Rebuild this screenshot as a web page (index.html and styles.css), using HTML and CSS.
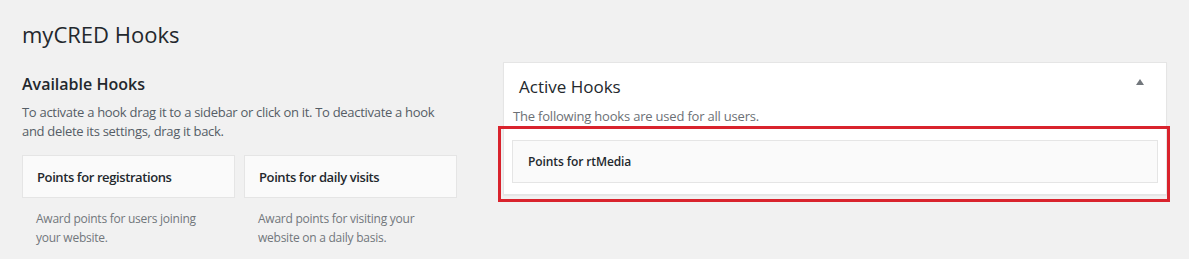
FILE: index.html
```html
<!DOCTYPE html>
<html>
<head>
<meta charset="utf-8">
<link rel="stylesheet" href="styles.css">
</head>
<body>
<div class="wrap">
  <h1 class="page-title">myCRED Hooks</h1>
  <div class="columns">
    <div class="left">
      <h2 class="section-title">Available Hooks</h2>
      <p class="section-desc">To activate a hook drag it to a sidebar or click on it. To deactivate a hook and delete its settings, drag it back.</p>
      <div class="hook-grid">
        <div class="hook">
          <div class="hook-card">Points for registrations</div>
          <p class="hook-desc">Award points for users joining your website.</p>
        </div>
        <div class="hook">
          <div class="hook-card">Points for daily visits</div>
          <p class="hook-desc">Award points for visiting your website on a daily basis.</p>
        </div>
      </div>
    </div>
    <div class="right">
      <div class="postbox">
        <div class="postbox-head">
          <h2 class="postbox-title">Active Hooks</h2>
          <span class="toggle"></span>
        </div>
        <p class="postbox-desc">The following hooks are used for all users.</p>
        <div class="active-area">
          <div class="hook-card active-card">Points for rtMedia</div>
          <div class="highlight"></div>
        </div>
      </div>
    </div>
  </div>
</div>
</body>
</html>
```

FILE: styles.css
```css
html, body {
  margin: 0;
  padding: 0;
  background: #f1f1f1;
}
body {
  font-family: "Open Sans", "Noto Sans", sans-serif;
  color: #23282d;
  font-size: 13px;
}
.wrap {
  padding: 0 22px 0 22px;
}
.page-title {
  margin: 0;
  padding-top: 20px;
  font-size: 22px;
  font-weight: 400;
  line-height: 29px;
  color: #23282d;
}
.columns {
  display: flex;
  margin-top: 23px;
}
.left {
  width: 435px;
  flex: none;
}
.right {
  flex: 1;
  margin-left: 46px;
  margin-top: -10px;
}
.section-title {
  margin: 0;
  font-size: 16px;
  font-weight: 600;
  line-height: 24px;
  color: #23282d;
}
.section-desc {
  margin: 7px 0 0 0;
  font-size: 13px;
  line-height: 19px;
  letter-spacing: -0.3px;
  color: #555d66;
}
.hook-grid {
  display: grid;
  grid-template-columns: 213px 213px;
  column-gap: 9px;
  margin-top: 14px;
}
.hook-card {
  box-sizing: border-box;
  height: 43px;
  background: #fafafa;
  border: 1px solid #e5e5e5;
  padding: 0 14px;
  display: flex;
  align-items: center;
  font-size: 13px;
  font-weight: 600;
  letter-spacing: -0.4px;
  color: #23282d;
}
.hook-desc {
  margin: 11px 0 0 0;
  padding: 0 14px;
  font-size: 12px;
  line-height: 19px;
  letter-spacing: -0.25px;
  color: #72777c;
}
.postbox {
  background: #fff;
  border: 1px solid #e5e5e5;
  box-shadow: 0 1px 1px rgba(0,0,0,0.04);
  padding: 0 8px 11px 8px;
}
.postbox-head {
  display: flex;
  align-items: center;
  justify-content: space-between;
  height: 43px;
  padding: 0 14px 0 7px;
}
.postbox-title {
  margin: 0;
  font-size: 17px;
  font-weight: 400;
  color: #23282d;
  margin-top: 4px;
}
.toggle {
  width: 0;
  height: 0;
  border-left: 4px solid transparent;
  border-right: 4px solid transparent;
  border-bottom: 6px solid #72777c;
  margin-top: -6px;
}
.postbox-desc {
  margin: 0;
  padding: 0 1px;
  font-size: 13px;
  line-height: 20px;
  letter-spacing: -0.2px;
  color: #6c7075;
}
.active-area {
  position: relative;
  padding-top: 14px;
}
.active-card {
  font-size: 12px;
  letter-spacing: -0.1px;
  padding-left: 15px;
  height: 43px;
}
.highlight {
  position: absolute;
  left: -14px;
  right: -12px;
  top: 0;
  bottom: -19px;
  border: 3px solid #d9232d;
  pointer-events: none;
}
```
